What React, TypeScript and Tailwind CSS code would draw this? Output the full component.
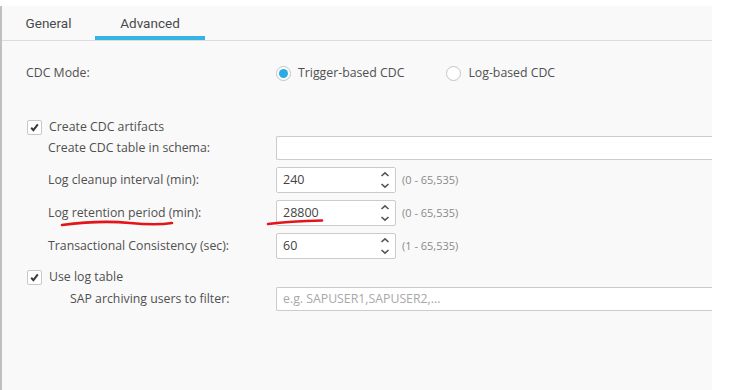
import React from "react";

const body = { fontFamily: '"Open Sans", "Noto Sans", sans-serif' };

function Radio({ checked, label }: { checked?: boolean; label: string }) {
  return (
    <label className="flex items-center gap-[7px] text-[12.3px] text-[#505050]">
      <span className="w-[15px] h-[15px] rounded-full border border-[#c4c4c4] bg-white flex items-center justify-center">
        {checked && <span className="w-[9px] h-[9px] rounded-full bg-[#2aabe4]" />}
      </span>
      {label}
    </label>
  );
}

function Check({ label }: { label: string }) {
  return (
    <div className="flex items-center gap-[7px] h-[18px] text-[12.3px] text-[#505050]">
      <span className="w-[15px] h-[15px] border border-[#c8c8c8] bg-white rounded-[2px] flex items-center justify-center">
        <svg width="9" height="9" viewBox="0 0 9 9">
          <path d="M1.2 4.8 L3.4 7.2 L7.8 1.4" fill="none" stroke="#3a3a3a" strokeWidth="2" />
        </svg>
      </span>
      {label}
    </div>
  );
}

function NumberRow({ label, value, range }: { label: string; value: string; range: string }) {
  return (
    <div className="flex items-center h-[26px]">
      <div className="w-[228px] text-[12.3px] text-[#505050]">{label}</div>
      <div className="w-[120px] h-[26px] border border-[#cbcbcb] rounded-[2px] bg-white flex items-center pl-[6px] pr-[5px] text-[12.5px] text-[#444]">
        <span className="flex-1">{value}</span>
        <svg width="10" height="18" viewBox="0 0 10 18">
          <path d="M1.5 5 L5 1.8 L8.5 5" fill="none" stroke="#555" strokeWidth="1.6" />
          <path d="M1.5 13 L5 16.2 L8.5 13" fill="none" stroke="#555" strokeWidth="1.6" />
        </svg>
      </div>
      <span className="ml-[6px] text-[11px] text-[#8a8a8a]">{range}</span>
    </div>
  );
}

export default function App() {
  return (
    <div className="relative w-[756px] h-[390px] bg-white overflow-hidden" style={body}>
      <div className="mt-[6px] w-[712px] h-[384px] bg-[#f9f9f9] border-l-2 border-[#c0c0c0] overflow-hidden">
        <div className="flex h-[35px] border-b border-[#dcdcdc]" style={{ fontFamily: "Roboto, sans-serif" }}>
          <div className="w-[93px] flex items-center justify-center pt-[1px] text-[13.5px] text-[#4a4a4a]">General</div>
          <div className="w-[110px] flex flex-col items-center text-[13.5px] text-[#4a4a4a]">
            <div className="flex-1 flex items-center pt-[5px]">Advanced</div>
            <div className="w-full h-[4px] bg-[#35b5e5]" />
          </div>
        </div>

        <div className="pl-[24px]">
          <div className="flex items-center h-[26px] mt-[19px]">
            <div className="w-[250px] text-[12.3px] text-[#505050]">CDC Mode:</div>
            <div className="flex items-center gap-[42px]">
              <Radio checked label="Trigger-based CDC" />
              <Radio label="Log-based CDC" />
            </div>
          </div>

          <div className="mt-[32px] pl-[1px]">
            <Check label="Create CDC artifacts" />
          </div>

          <div className="pl-[22px] flex flex-col gap-[7px]">
            <div className="flex items-center h-[24px]">
              <div className="w-[228px] text-[12.3px] text-[#505050]">Create CDC table in schema:</div>
              <div className="flex-1 h-[24px] border border-[#cbcbcb] border-r-0 rounded-l-[2px] bg-white" />
            </div>
            <NumberRow label="Log cleanup interval (min):" value="240" range="(0 - 65,535)" />
            <NumberRow label="Log retention period (min):" value="28800" range="(0 - 65,535)" />
            <NumberRow label="Transactional Consistency (sec):" value="60" range="(1 - 65,535)" />
          </div>

          <div className="mt-[9px] pl-[1px]">
            <Check label="Use log table" />
          </div>

          <div className="flex items-center h-[24px] mt-[1px] pl-[44px]">
            <div className="w-[206px] text-[12.3px] text-[#505050]">SAP archiving users to filter:</div>
            <div className="flex-1 h-[24px] border border-[#cbcbcb] border-r-0 rounded-l-[2px] bg-white flex items-center pl-[6px] text-[12.3px] text-[#a8a8a8]">
              e.g. SAPUSER1,SAPUSER2,...
            </div>
          </div>
        </div>
      </div>

      <svg className="absolute left-0 top-0 pointer-events-none" width="756" height="390">
        <path d="M62 225 C 85 222, 110 221, 130 223 S 160 225, 172 223" fill="none" stroke="#e3141a" strokeWidth="2.6" strokeLinecap="round" />
        <path d="M268 224 C 285 222, 305 221, 322 220.5" fill="none" stroke="#e3141a" strokeWidth="2.6" strokeLinecap="round" />
      </svg>
    </div>
  );
}
